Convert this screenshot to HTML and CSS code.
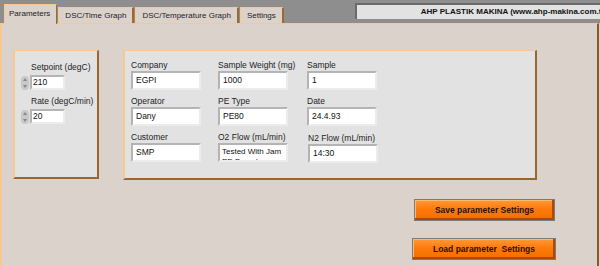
FILE: index.html
```html
<!DOCTYPE html>
<html>
<head>
<meta charset="utf-8">
<link rel="stylesheet" href="styles.css">
</head>
<body>
<div class="app">
  <div class="header">
    <div class="tabs">
      <div class="tab tab-active">Parameters</div>
      <div class="tab">DSC/Time Graph</div>
      <div class="tab">DSC/Temperature Graph</div>
      <div class="tab">Settings</div>
    </div>
    <div class="title">AHP PLASTIK MAKINA (www.ahp-makina.com.tr)</div>
  </div>
  <div class="panel">
    <div class="boxes">
      <div class="box box-left">
        <div class="lfield">
          <div class="label">Setpoint (degC)</div>
          <div class="spinrow">
            <div class="spin"><span class="up"></span><span class="down"></span></div>
            <div class="input small">210</div>
          </div>
        </div>
        <div class="lfield">
          <div class="label">Rate (degC/min)</div>
          <div class="spinrow">
            <div class="spin"><span class="up"></span><span class="down"></span></div>
            <div class="input small">20</div>
          </div>
        </div>
      </div>
      <div class="box box-right">
        <div class="grid">
          <div class="field"><div class="label">Company</div><div class="input">EGPI</div></div>
          <div class="field"><div class="label">Sample Weight (mg)</div><div class="input">1000</div></div>
          <div class="field"><div class="label">Sample</div><div class="input">1</div></div>
          <div class="field"><div class="label">Operator</div><div class="input">Dany</div></div>
          <div class="field"><div class="label">PE Type</div><div class="input">PE80</div></div>
          <div class="field"><div class="label">Date</div><div class="input">24.4.93</div></div>
          <div class="field"><div class="label">Customer</div><div class="input">SMP</div></div>
          <div class="field"><div class="label">O2 Flow (mL/min)</div><div class="input multi">Tested With Jam<br>PE Based</div></div>
          <div class="field shift"><div class="label">N2 Flow (mL/min)</div><div class="input">14:30</div></div>
        </div>
      </div>
    </div>
    <div class="buttons">
      <div class="btn btn-save">Save parameter Settings</div>
      <div class="btn btn-load">Load parameter&nbsp; Settings</div>
    </div>
  </div>
</div>
</body>
</html>
```
FILE: styles.css
```css
html, body {
  margin: 0;
  padding: 0;
}
body {
  width: 600px;
  height: 266px;
  overflow: hidden;
  background: #dbd2cc;
  font-family: "Liberation Sans", Arial, sans-serif;
  font-size: 8.5px;
  color: #1a1a1a;
}
.app {
  display: flex;
  flex-direction: column;
  height: 266px;
}
.header {
  height: 23px;
  background: #8e8e8e;
  display: flex;
  align-items: flex-start;
  position: relative;
  z-index: 2;
}
.tabs {
  display: flex;
  align-items: flex-end;
  height: 24px;
  padding-left: 4px;
  gap: 1px;
}
.tab {
  height: 15px;
  line-height: 15px;
  padding: 0 6px;
  background: #dbd2cc;
  border-top: 1px solid #f6c990;
  border-left: 1px solid #f6c990;
  border-right: 2px solid #9a6a30;
  font-size: 8px;
  color: #222;
  box-sizing: content-box;
  margin-bottom: 1px;
  white-space: nowrap;
}
.tab-active {
  height: 19px;
  line-height: 17px;
  padding: 0 6px 0 4px;
  margin-bottom: 0;
  border-right: 1px solid #9a6a30;
}
.title {
  margin-left: 71px;
  margin-top: 3px;
  flex: 1;
  height: 14px;
  background: #e2e2e2;
  border-top: 2px solid #6a6a6a;
  border-left: 2px solid #6a6a6a;
  font-weight: bold;
  font-size: 8px;
  line-height: 14px;
  white-space: nowrap;
  overflow: hidden;
  padding-left: 64px;
  color: #111;
}
.panel {
  flex: 1;
  border-top: 1px solid #f6c990;
  border-left: 2px solid #f6c990;
  border-right: 2px solid #8a5a20;
  margin-right: 1px;
  display: flex;
  flex-direction: column;
}
.boxes {
  display: flex;
  align-items: flex-start;
  margin-top: 26px;
  padding-left: 11px;
}
.box {
  background: #e2e2e2;
  border-top: 1px solid #f6c990;
  border-left: 2px solid #f6c990;
  border-right: 2px solid #9a6630;
  border-bottom: 2px solid #9a6630;
  box-sizing: border-box;
}
.box-left {
  width: 86px;
  height: 129px;
  padding: 11px 0 0 6px;
}
.box-right {
  margin-left: 24px;
  width: 414px;
  height: 130px;
  padding: 9px 0 0 6px;
}
.label {
  height: 11px;
  line-height: 11px;
  white-space: nowrap;
  color: #222;
}
.lfield .label {
  padding-left: 10px;
  margin-bottom: 2px;
}
.lfield + .lfield {
  margin-top: 6px;
}
.spinrow {
  display: flex;
  align-items: center;
}
.spin {
  width: 8px;
  height: 14px;
  background: #c8c8c8;
  border-radius: 4px;
  display: flex;
  flex-direction: column;
  align-items: center;
  justify-content: space-around;
  margin-right: 1px;
}
.spin .up {
  width: 0; height: 0;
  border-left: 2px solid transparent;
  border-right: 2px solid transparent;
  border-bottom: 3px solid #888;
}
.spin .down {
  width: 0; height: 0;
  border-left: 2px solid transparent;
  border-right: 2px solid transparent;
  border-top: 3px solid #888;
}
.input {
  background: #fff;
  border-top: 2px solid #b4b4b4;
  border-left: 2px solid #b4b4b4;
  border-right: 2px solid #ececec;
  border-bottom: 2px solid #ececec;
  box-sizing: border-box;
  height: 19px;
  line-height: 14px;
  padding-left: 3px;
  white-space: nowrap;
  overflow: hidden;
  color: #111;
}
.input.small {
  width: 35px;
  height: 15px;
  line-height: 11px;
  padding-left: 1px;
}
.input.multi {
  line-height: 10px;
  padding-top: 2px;
  padding-left: 2px;
  font-size: 8px;
}
.grid {
  display: grid;
  grid-template-columns: 87px 89px 72px;
  row-gap: 6px;
}
.field .input {
  width: 70px;
}
.field .label {
  margin-bottom: 0;
}
.field.shift {
  padding-left: 1px;
}
.field.shift .label {
  margin-top: 1px;
}
.buttons {
  display: flex;
  flex-direction: column;
  align-items: flex-start;
  padding-left: 410px;
  margin-top: 19px;
}
.btn {
  box-sizing: border-box;
  border: 1px solid #7a7a7a;
  background: linear-gradient(#ff9a3a, #ff7a0a 45%, #f06e00);
  box-shadow: inset -2px -2px 0 #b04a00, inset 1px 1px 0 #ffb870;
  font-weight: bold;
  font-size: 8.5px;
  color: #2a1200;
  text-align: center;
  white-space: nowrap;
}
.btn-save {
  width: 141px;
  height: 22px;
  line-height: 20px;
  margin-left: 2px;
}
.btn-load {
  width: 144px;
  height: 22px;
  line-height: 20px;
  margin-top: 17px;
}
```
